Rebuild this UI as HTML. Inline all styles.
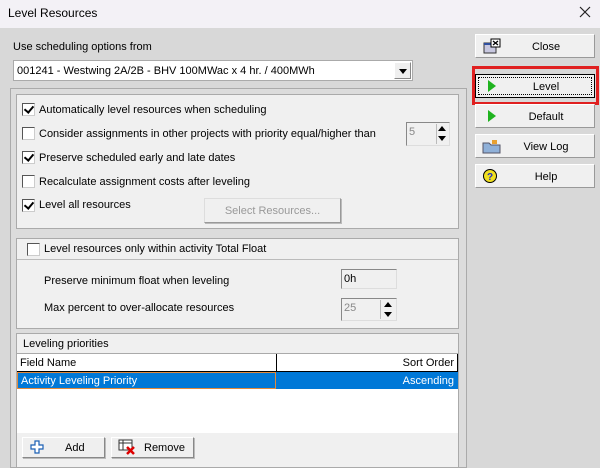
<!DOCTYPE html>
<html><head><style>
*{box-sizing:border-box;margin:0;padding:0}
body{width:600px;height:462px;overflow:hidden;background:#d8d8d8;font-family:"Liberation Sans",sans-serif;font-size:11px;color:#000;position:relative}
.a{position:absolute}
.cb{position:absolute;width:13px;height:13px;background:#fff;border:1px solid #555;border-right-color:#ccc;border-bottom-color:#ccc}
.cb.on::after{content:"";position:absolute;left:3px;top:0px;width:4px;height:7px;border:solid #000;border-width:0 2px 2px 0;transform:rotate(40deg)}
.btn{position:absolute;background:#efefef;border:1px solid #fff;border-right-color:#888;border-bottom-color:#888;box-shadow:1px 1px 0 #bbb}
.rb{position:absolute;left:475px;width:120px;height:24px;background:#f0f0f0;border:1px solid #fff;border-right-color:#999;border-bottom-color:#999;font-size:11px}
.rb span{position:absolute;left:0;right:0;top:6px;text-align:center;padding-left:22px}
.tri{position:absolute;left:12px;top:5px;width:0;height:0;border-left:8px solid #1fb31f;border-top:6px solid transparent;border-bottom:6px solid transparent}
.sunk{position:absolute;background:#fff;border:1px solid #888;border-right-color:#ddd;border-bottom-color:#ddd}
</style></head><body>
<div class="a" style="left:0;top:0;width:600px;height:28px;background:#f3f1f6"></div>
<div class="a" style="left:8px;top:6px;font-size:12px">Level Resources</div>
<svg class="a" style="left:579px;top:6px" width="12" height="12"><path d="M1 1L11 11M11 1L1 11" stroke="#222" stroke-width="1.2"/></svg>

<div class="a" style="left:13px;top:41px">Use scheduling options from</div>
<div class="sunk" style="left:13px;top:60px;width:400px;height:21px;border-color:#aaa"></div>
<div class="a" style="left:17px;top:65px">001241 - Westwing 2A/2B - BHV 100MWac x 4 hr. / 400MWh</div>
<div class="btn" style="left:394px;top:62px;width:17px;height:17px;box-shadow:none"></div>
<div class="a" style="left:399px;top:69px;border-top:5px solid #000;border-left:4px solid transparent;border-right:4px solid transparent"></div>

<div class="a" style="left:10px;top:88px;width:457px;height:380px;border:1px solid #aaa;background:#dcdcdc"></div>
<!-- group1 -->
<div class="a" style="left:16px;top:94px;width:443px;height:135px;background:#f0f0f0;border:1px solid #aaa"></div>
<div class="cb on" style="left:22px;top:103px"></div><div class="a" style="left:39px;top:104px">Automatically level resources when scheduling</div>
<div class="cb" style="left:22px;top:127px"></div><div class="a" style="left:39px;top:128px">Consider assignments in other projects with priority equal/higher than</div>
<div class="sunk" style="left:406px;top:122px;width:44px;height:24px;background:#f0f0f0"></div>
<div class="a" style="left:409px;top:126px;color:#888">5</div>
<div class="a" style="left:436px;top:124px;width:12px;height:20px;border-left:1px solid #bbb"></div>
<div class="a" style="left:438px;top:126px;border-bottom:5px solid #000;border-left:4px solid transparent;border-right:4px solid transparent"></div>
<div class="a" style="left:438px;top:136px;border-top:5px solid #000;border-left:4px solid transparent;border-right:4px solid transparent"></div>
<div class="cb on" style="left:22px;top:151px"></div><div class="a" style="left:39px;top:152px">Preserve scheduled early and late dates</div>
<div class="cb" style="left:22px;top:175px"></div><div class="a" style="left:39px;top:176px">Recalculate assignment costs after leveling</div>
<div class="cb on" style="left:22px;top:199px"></div><div class="a" style="left:39px;top:199px">Level all resources</div>
<div class="btn" style="left:204px;top:198px;width:137px;height:25px;background:#f0f0f0;border-color:#ddd #999 #999 #ddd"></div>
<div class="a" style="left:204px;top:205px;width:137px;text-align:center;color:#999">Select Resources...</div>

<!-- group2 -->
<div class="a" style="left:16px;top:238px;width:443px;height:91px;background:#f0f0f0;border:1px solid #aaa"></div>
<div class="a" style="left:17px;top:259px;width:441px;height:1px;background:#bbb"></div>
<div class="cb" style="left:27px;top:243px"></div><div class="a" style="left:44px;top:243px">Level resources only within activity Total Float</div>
<div class="a" style="left:44px;top:275px">Preserve minimum float when leveling</div>
<div class="sunk" style="left:341px;top:269px;width:56px;height:20px;background:#f0f0f0"></div>
<div class="a" style="left:344px;top:273px">0h</div>
<div class="a" style="left:44px;top:302px">Max percent to over-allocate resources</div>
<div class="sunk" style="left:341px;top:298px;width:56px;height:23px;background:#f0f0f0"></div>
<div class="a" style="left:344px;top:302px;color:#888">25</div>
<div class="a" style="left:380px;top:300px;width:15px;height:19px;border-left:1px solid #bbb"></div>
<div class="a" style="left:384px;top:302px;border-bottom:5px solid #000;border-left:4px solid transparent;border-right:4px solid transparent"></div>
<div class="a" style="left:384px;top:312px;border-top:5px solid #000;border-left:4px solid transparent;border-right:4px solid transparent"></div>

<!-- group3 -->
<div class="a" style="left:16px;top:333px;width:443px;height:135px;background:#f0f0f0;border:1px solid #aaa"></div>
<div class="a" style="left:23px;top:338px">Leveling priorities</div>
<div class="a" style="left:17px;top:353px;width:441px;height:80px;background:#fff;border-top:1px solid #aaa"></div>
<div class="a" style="left:17px;top:371px;width:441px;height:1px;background:#000"></div>
<div class="a" style="left:276px;top:354px;width:1px;height:17px;background:#000"></div>
<div class="a" style="left:457px;top:354px;width:1px;height:17px;background:#000"></div>
<div class="a" style="left:20px;top:357px">Field Name</div>
<div class="a" style="left:300px;top:357px;width:154px;text-align:right">Sort Order</div>
<div class="a" style="left:17px;top:372px;width:441px;height:17px;background:#0078d7"></div>
<div class="a" style="left:17px;top:372px;width:259px;height:17px;border:1px solid #e08a3c"></div>
<div class="a" style="left:21px;top:375px;color:#fff">Activity Leveling Priority</div>
<div class="a" style="left:300px;top:375px;width:154px;text-align:right;color:#fff">Ascending</div>
<div class="btn" style="left:22px;top:437px;width:83px;height:21px"></div>
<svg class="a" style="left:30px;top:440px" width="15" height="15"><path d="M5 1h4v4h4v4H9v4H5V9H1V5h4z" fill="#fff" stroke="#1a5fb4" stroke-width="1.2"/></svg>
<div class="a" style="left:65px;top:442px">Add</div>
<div class="btn" style="left:111px;top:437px;width:83px;height:21px"></div>
<svg class="a" style="left:118px;top:439px" width="18" height="16"><rect x="1" y="1" width="13" height="10" fill="#fff" stroke="#333"/><line x1="1" y1="4" x2="14" y2="4" stroke="#333"/><line x1="5" y1="1" x2="5" y2="11" stroke="#333"/><path d="M9 8l7 7M16 8l-7 7" stroke="#d00" stroke-width="2.5"/></svg>
<div class="a" style="left:144px;top:442px">Remove</div>

<!-- right -->
<div class="rb" style="top:34px"><span>Close</span>
<svg class="a" style="left:7px;top:3px" width="20" height="17"><rect x="1" y="5" width="12" height="10" fill="#c8c8e0" stroke="#333"/><rect x="1" y="5" width="12" height="2" fill="#3050a0"/><rect x="8" y="1" width="9" height="8" fill="#fff" stroke="#000"/><path d="M10 3l5 4M15 3l-5 4" stroke="#000" stroke-width="1.3"/></svg></div>
<div class="a" style="left:472px;top:66px;width:127px;height:39px;border:3px solid #e02020"></div>
<div class="rb" style="top:74px;border:1px solid #000;background:#f0f0f0"><div class="a" style="left:2px;top:2px;right:2px;bottom:2px;border:1px dotted #000"></div><i class="tri"></i><span>Level</span></div>
<div class="rb" style="top:104px"><i class="tri"></i><span>Default</span></div>
<div class="rb" style="top:134px"><span>View Log</span>
<svg class="a" style="left:6px;top:3px" width="20" height="17"><path d="M1 5h6l2 2h9v8H1z" fill="#8fb0d8" stroke="#556"/><path d="M10 2h5v4h-5z" fill="#e8a030"/></svg></div>
<div class="rb" style="top:164px"><span>Help</span>
<svg class="a" style="left:6px;top:3px" width="16" height="16"><circle cx="8" cy="8" r="6.5" fill="#f0e020" stroke="#000"/><text x="8" y="12" font-size="10" font-weight="bold" text-anchor="middle" fill="#2030c0" font-family="Liberation Sans">?</text></svg></div>
</body></html>
